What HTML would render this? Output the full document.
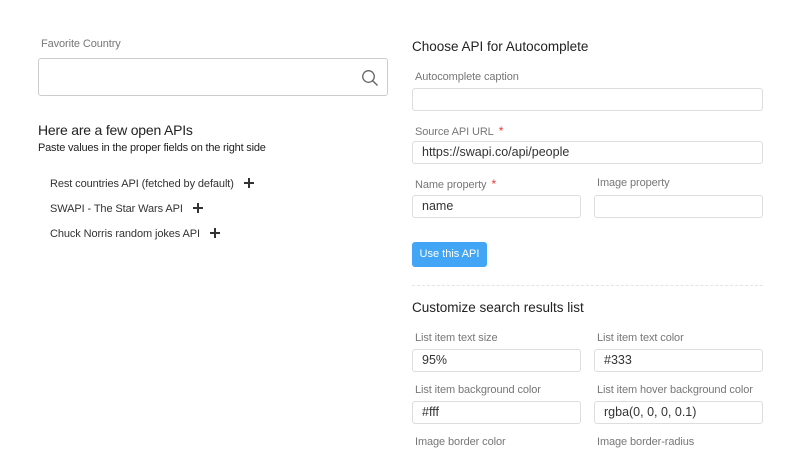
<!DOCTYPE html>
<html><head><style>
*{margin:0;padding:0;box-sizing:border-box}
body{width:800px;height:450px;background:#fff;font-family:"Liberation Sans",sans-serif;position:relative;overflow:hidden;color:#333}
.a{position:absolute;white-space:nowrap}
.lbl{font-size:11px;color:#777;letter-spacing:-0.1px}
.in{position:absolute;border:1px solid #ddd;border-radius:3px;height:23px;font-size:12.5px;color:#333;padding-left:9px;line-height:21px}
.star{color:#e53935;font-size:12px;margin-left:5px}
.plus{display:inline-block;position:relative;width:10px;height:10px;margin-left:10px;vertical-align:-1px}
.plus:before{content:"";position:absolute;left:0;top:4px;width:10px;height:1.6px;background:#333}
.plus:after{content:"";position:absolute;left:4.2px;top:0;width:1.6px;height:10px;background:#333}
.li{font-size:11px;color:#333;letter-spacing:-0.1px}
</style></head><body>
<div class="a lbl" style="left:41px;top:38px">Favorite Country</div>
<div class="in" style="left:38px;top:58px;width:350px;height:38px;border-color:#ccc"></div>
<svg class="a" style="left:360px;top:68px" width="20" height="20" viewBox="0 0 20 20"><circle cx="8.5" cy="8.5" r="5.8" fill="none" stroke="#666" stroke-width="1.3"/><path d="M12.7 12.7L17.5 17.5" stroke="#666" stroke-width="1.4"/></svg>
<div class="a" style="left:38px;top:122px;font-size:14px;color:#222;letter-spacing:-0.2px">Here are a few open APIs</div>
<div class="a" style="left:38px;top:142px;font-size:11px;color:#222;letter-spacing:-0.2px">Paste values in the proper fields on the right side</div>
<div class="a li" style="left:50px;top:178px">Rest countries API (fetched by default)<span class="plus"></span></div>
<div class="a li" style="left:50px;top:203px">SWAPI - The Star Wars API<span class="plus"></span></div>
<div class="a li" style="left:50px;top:228px">Chuck Norris random jokes API<span class="plus"></span></div>

<div class="a" style="left:412px;top:39px;font-size:13.5px;color:#222">Choose API for Autocomplete</div>
<div class="a lbl" style="left:415px;top:71px">Autocomplete caption</div>
<div class="in" style="left:412px;top:88px;width:351px"></div>
<div class="a lbl" style="left:415px;top:124px">Source API URL<span class="star">*</span></div>
<div class="in" style="left:412px;top:141px;width:351px">https://swapi.co/api/people</div>
<div class="a lbl" style="left:415px;top:177px">Name property<span class="star">*</span></div>
<div class="a lbl" style="left:597px;top:177px">Image property</div>
<div class="in" style="left:412px;top:195px;width:169px">name</div>
<div class="in" style="left:594px;top:195px;width:169px"></div>
<div class="a" style="left:412px;top:242px;width:75px;height:25px;background:#42a5f5;border-radius:3px;color:#fff;font-size:11px;line-height:25px;text-align:center">Use this API</div>
<div class="a" style="left:412px;top:285px;width:351px;border-top:1px dashed #e4e4e4"></div>
<div class="a" style="left:412px;top:300px;font-size:13.5px;color:#222">Customize search results list</div>
<div class="a lbl" style="left:415px;top:332px">List item text size</div>
<div class="a lbl" style="left:597px;top:332px">List item text color</div>
<div class="in" style="left:412px;top:349px;width:169px">95%</div>
<div class="in" style="left:594px;top:349px;width:169px">#333</div>
<div class="a lbl" style="left:415px;top:384px">List item background color</div>
<div class="a lbl" style="left:597px;top:384px">List item hover background color</div>
<div class="in" style="left:412px;top:401px;width:169px">#fff</div>
<div class="in" style="left:594px;top:401px;width:169px">rgba(0, 0, 0, 0.1)</div>
<div class="a lbl" style="left:415px;top:436px">Image border color</div>
<div class="a lbl" style="left:597px;top:436px">Image border-radius</div>
</body></html>
